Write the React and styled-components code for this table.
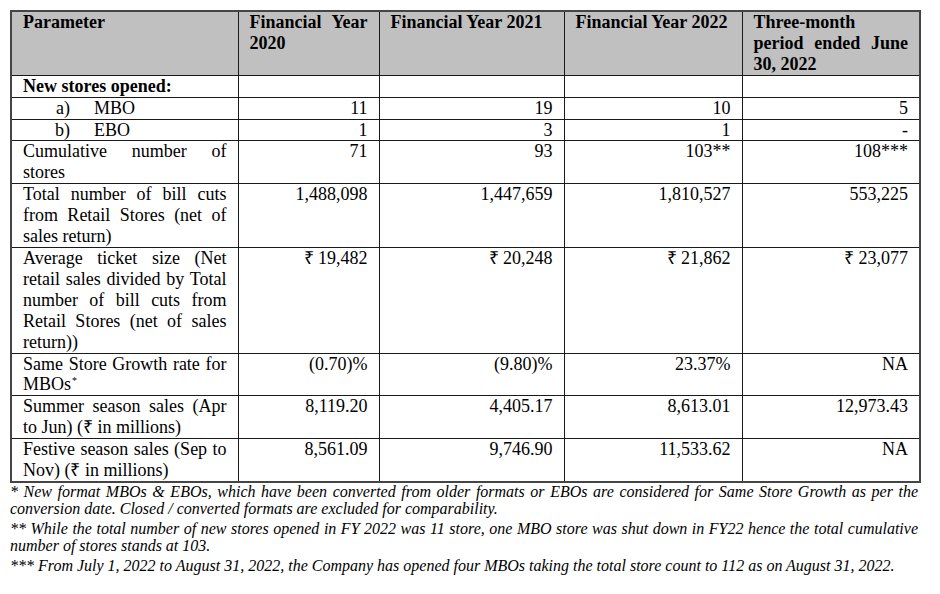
import React from 'react';
import styled, { createGlobalStyle } from 'styled-components';

const GlobalStyle = createGlobalStyle`
  body {
    margin: 0;
    background: #fff;
    font-family: "Liberation Serif", "Times New Roman", serif;
    color: #000;
  }
`

const Page = styled.div`
  padding: 10px 0 0 10px;
  width: 910px;
`

const Table = styled.table`
  border-collapse: collapse;
  table-layout: fixed;
  width: 909px;
  border: 2px solid #454545;
  font-size: 18px;
  line-height: 20.9px;
`

const HeadCell = styled.th`
  background: #c0c0c0;
  font-weight: bold;
  text-align: ${p => (p.$justify ? 'justify' : 'left')};
  vertical-align: top;
  padding: 0 11px 0 11px;
  border: 1px solid #1a1a1a;
  height: 62px;
`

const Cell = styled.td`
  vertical-align: top;
  padding: 0 11px 0 11px;
  border: 1px solid #1a1a1a;
  text-align: ${p => (p.$num ? 'right' : 'justify')};
  font-weight: ${p => (p.$bold ? 'bold' : 'normal')};
`

const Marker = styled.span`
  display: inline-block;
  width: 47px;
  text-align: right;
  margin-right: 24px;
`

const Sup = styled.sup`
  font-size: 10px;
  line-height: 0;
  vertical-align: 6px;
  margin-left: 1px;
`

const Notes = styled.div`
  width: 908px;
  font-style: italic;
  font-size: 16px;
  line-height: 17px;
`

const Note = styled.p`
  margin: 0 0 3px;
  text-align: justify;
`

const rows = [
  { label: <><Marker>a)</Marker>MBO</>, vals: ['11', '19', '10', '5'] },
  { label: <><Marker>b)</Marker>EBO</>, vals: ['1', '3', '1', '-'] },
  { label: 'Cumulative number of stores', vals: ['71', '93', '103**', '108***'] },
  {
    label: 'Total number of bill cuts from Retail Stores (net of sales return)',
    vals: ['1,488,098', '1,447,659', '1,810,527', '553,225'],
  },
  {
    label: 'Average ticket size (Net retail sales divided by Total number of bill cuts from Retail Stores (net of sales return))',
    vals: ['₹ 19,482', '₹ 20,248', '₹ 21,862', '₹ 23,077'],
  },
  {
    label: <>Same Store Growth rate for MBOs<Sup>*</Sup></>,
    vals: ['(0.70)%', '(9.80)%', '23.37%', 'NA'],
  },
  {
    label: 'Summer season sales (Apr to Jun) (₹ in millions)',
    vals: ['8,119.20', '4,405.17', '8,613.01', '12,973.43'],
  },
  {
    label: 'Festive season sales (Sep to Nov) (₹ in millions)',
    vals: ['8,561.09', '9,746.90', '11,533.62', 'NA'],
  },
]

const App = () => {
  return (
    <Page>
      <GlobalStyle />
      <Table>
        <colgroup>
          <col style={{ width: 227 }} />
          <col style={{ width: 141 }} />
          <col style={{ width: 185 }} />
          <col style={{ width: 178 }} />
          <col style={{ width: 178 }} />
        </colgroup>
        <thead>
          <tr>
            <HeadCell>Parameter</HeadCell>
            <HeadCell $justify>Financial Year 2020</HeadCell>
            <HeadCell>Financial Year 2021</HeadCell>
            <HeadCell>Financial Year 2022</HeadCell>
            <HeadCell $justify>Three-month period ended June 30, 2022</HeadCell>
          </tr>
        </thead>
        <tbody>
          <tr>
            <Cell $bold>New stores opened:</Cell>
            <Cell />
            <Cell />
            <Cell />
            <Cell />
          </tr>
          {rows.map((r, i) => (
            <tr key={i}>
              <Cell>{r.label}</Cell>
              {r.vals.map((v, j) => (
                <Cell $num key={j}>{v}</Cell>
              ))}
            </tr>
          ))}
        </tbody>
      </Table>
      <Notes>
        <Note>
          * New format MBOs &amp; EBOs, which have been converted from older formats or EBOs are considered for Same Store Growth as per the conversion date. Closed / converted formats are excluded for comparability.
        </Note>
        <Note>
          ** While the total number of new stores opened in FY 2022 was 11 store, one MBO store was shut down in FY22 hence the total cumulative number of stores stands at 103.
        </Note>
        <Note>
          *** From July 1, 2022 to August 31, 2022, the Company has opened four MBOs taking the total store count to 112 as on August 31, 2022.
        </Note>
      </Notes>
    </Page>
  )
}

export default App;
